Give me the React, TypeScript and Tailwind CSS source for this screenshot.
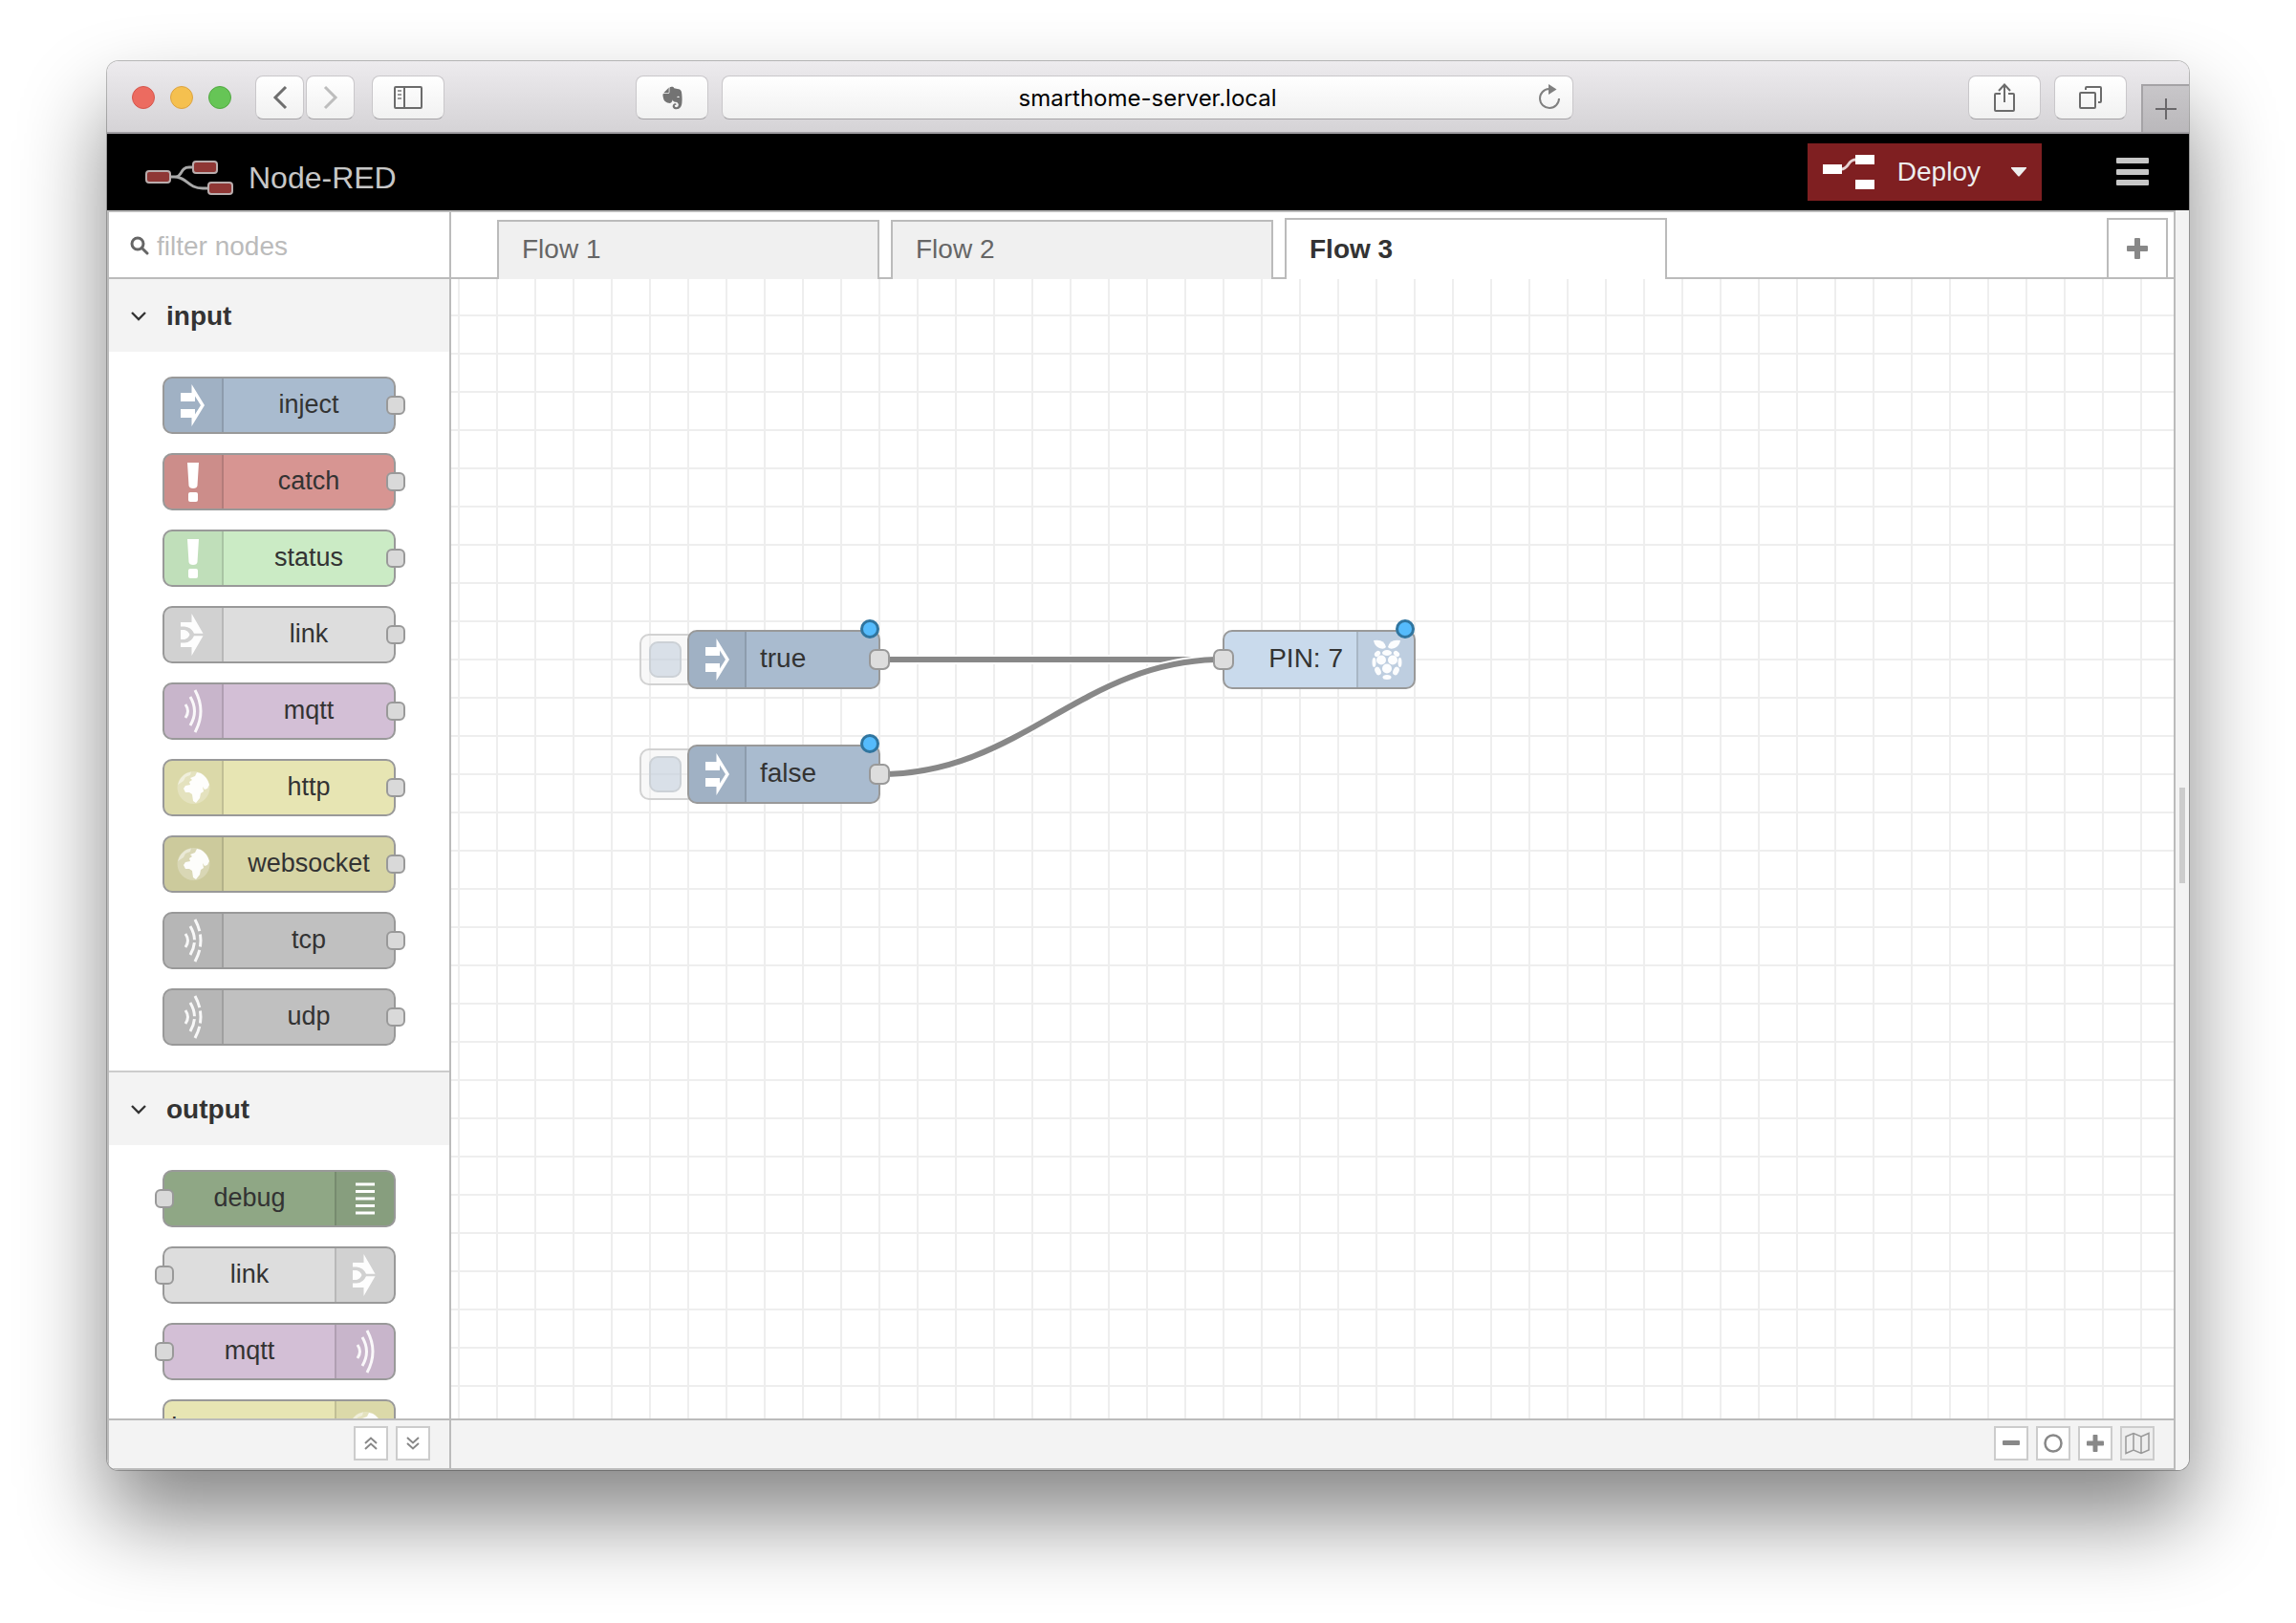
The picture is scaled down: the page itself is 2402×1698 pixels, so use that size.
import React from "react";
import clsx from "clsx";
import { FaEvernote } from "react-icons/fa";

type IconName =
  | "inject"
  | "alert"
  | "link"
  | "bridge"
  | "bridgeDash"
  | "globe"
  | "debug"
  | "raspberry";

type PaletteItem = { label: string; color: string; icon: IconName };

const inputs: PaletteItem[] = [
  { label: "inject", color: "bg-[#a9bbcf]", icon: "inject" },
  { label: "catch", color: "bg-[#d79592]", icon: "alert" },
  { label: "status", color: "bg-[#cbebc5]", icon: "alert" },
  { label: "link", color: "bg-[#dddddd]", icon: "link" },
  { label: "mqtt", color: "bg-[#d3bfd6]", icon: "bridge" },
  { label: "http", color: "bg-[#e7e5b3]", icon: "globe" },
  { label: "websocket", color: "bg-[#d7d5a5]", icon: "globe" },
  { label: "tcp", color: "bg-[#c0c0c0]", icon: "bridgeDash" },
  { label: "udp", color: "bg-[#c0c0c0]", icon: "bridgeDash" },
];

const outputs: PaletteItem[] = [
  { label: "debug", color: "bg-[#8fa785]", icon: "debug" },
  { label: "link", color: "bg-[#dddddd]", icon: "link" },
  { label: "mqtt", color: "bg-[#d3bfd6]", icon: "bridge" },
  { label: "http response", color: "bg-[#e7e5b3]", icon: "globe" },
];

const flows = ["Flow 1", "Flow 2", "Flow 3"];

const NodeIcon = ({ name }: { name: IconName }) => (
  <svg viewBox="0 0 60 60" className="size-[60px] shrink-0" fill="#fff" aria-hidden="true">
    {name === "inject" && (
      <path d="M17 17H28.500V8L42 30L28.500 52V43H17V34H32V39.500L38 30L32 20.500V26H17Z" />
    )}
    {name === "alert" && (
      <>
        <path d="M24 10H36L34.500 34Q34 37 30 37Q26 37 25.500 34Z" />
        <rect x="25" y="41" width="10" height="10" rx="2" />
      </>
    )}
    {name === "link" && (
      <g fillOpacity="0.95">
        <path d="M17 17H28.500V8L40.500 28.800H31Q28 22 21 21.500H17Z" />
        <path d="M17 43H28.500V52L40.500 31.200H31Q28 38 21 38.500H17Z" />
        <path d="M17 25H21Q25 26 26.500 30Q25 34 21 35H17Z" />
      </g>
    )}
    {(name === "bridge" || name === "bridgeDash") && (
      <g fill="none" stroke="#fff" strokeWidth="3" strokeOpacity="0.9">
        <path d="M22 23Q27 30 22 37" />
        <path d="M27 15Q36 30 27 45" strokeDasharray={name === "bridge" ? undefined : "15 3"} />
        <path d="M32 8Q44 30 32 52" strokeDasharray={name === "bridge" ? undefined : "13 3.500"} />
      </g>
    )}
    {name === "globe" && (
      <>
        <circle cx="30.500" cy="30" r="17" fillOpacity="0.25" />
        <path
          d="M14 27Q16 19 23 15L28 13.500L27 17L22 19L20 23L17 25Z"
          fillOpacity="0.45"
        />
        <path
          fillOpacity="0.95"
          d="M34 14L38 15Q45 19 47 27L45 31L42 32L40 29L41 34L38 36L37 41L33 46L30 44L29 37L26 35H22L20 31L22 28L27 27L26 24L29 22L27 20L32 18Z"
        />
      </>
    )}
    {name === "debug" && (
      <path
        d="M20 15H40M20 22.500H40M20 30H40M20 37.500H40M20 45H40"
        stroke="#fff"
        strokeWidth="3"
      />
    )}
    {name === "raspberry" && (
      <g fillOpacity="0.95">
        <path d="M16 10Q27 8 29 17Q27 20 22 18Q17 16 16 10Z" />
        <path d="M44 10Q33 8 31 17Q33 20 38 18Q43 16 44 10Z" />
        <ellipse cx="30" cy="23" rx="5" ry="3" />
        <ellipse cx="20" cy="24" rx="3.500" ry="2.500" transform="rotate(-40 20 24)" />
        <ellipse cx="40" cy="24" rx="3.500" ry="2.500" transform="rotate(40 40 24)" />
        <circle cx="24" cy="30.500" r="5" />
        <circle cx="36" cy="30.500" r="5" />
        <ellipse cx="16.500" cy="33" rx="2" ry="5" />
        <ellipse cx="43.500" cy="33" rx="2" ry="5" />
        <circle cx="30" cy="39.500" r="5" />
        <ellipse cx="20.500" cy="42" rx="3" ry="4.500" transform="rotate(-25 20.500 42)" />
        <ellipse cx="39.500" cy="42" rx="3" ry="4.500" transform="rotate(25 39.500 42)" />
        <ellipse cx="30" cy="48.500" rx="4.500" ry="2.500" />
      </g>
    )}
  </svg>
);

const PaletteNode = ({ item, output }: { item: PaletteItem; output?: boolean }) => (
  <li
    className={clsx(
      "relative flex h-[60px] w-[244px] shrink-0 rounded-[10px] border-2 border-[#999]",
      item.color,
      output && "flex-row-reverse"
    )}
  >
    <div
      className={clsx(
        "flex w-[62px] shrink-0 items-center overflow-hidden bg-black/5",
        output
          ? "rounded-r-[8px] border-l-2 border-black/12"
          : "rounded-l-[8px] border-r-2 border-black/12"
      )}
    >
      <NodeIcon name={item.icon} />
    </div>
    <span className="flex-1 self-center pb-[2px] text-center text-[27px] leading-8 whitespace-nowrap text-[#333]">
      {item.label}
    </span>
    <span
      className={clsx(
        "absolute top-[18px] size-5 rounded-[6px] border-2 border-[#999] bg-[#d9d9d9]",
        output ? "-left-[10px]" : "-right-[12px]"
      )}
    />
  </li>
);

const Category = ({
  title,
  items,
  output,
}: {
  title: string;
  items: PaletteItem[];
  output?: boolean;
}) => (
  <section className={clsx("shrink-0", output && "border-t-2 border-[#ccc]")}>
    <h2>
      <button
        type="button"
        className="flex h-[76px] w-full items-center bg-[#f3f3f3] pt-[2px] pl-[23px] text-[28px] leading-8 font-bold text-[#333]"
      >
        <svg viewBox="0 0 16 12" className="mr-[21px] h-3 w-4" fill="none" stroke="#333" strokeWidth="2.400">
          <path d="M1 2L8 9L15 2" />
        </svg>
        {title}
      </button>
    </h2>
    <ul className="flex flex-col gap-5 py-[26px] pl-14">
      {items.map((item) => (
        <PaletteNode key={item.label} item={item} output={output} />
      ))}
    </ul>
  </section>
);

const chromeButton =
  "flex h-[46px] items-center justify-center rounded-[8px] border border-[#c9c7ca] border-b-[#a5a3a6] bg-linear-to-b from-white to-[#f1f1f1]";

const Toolbar = () => (
  <div className="flex h-[76px] shrink-0 items-center border-b-2 border-[#a09ea2] bg-linear-to-b from-[#edebee] to-[#d5d3d6] pt-[2px] pl-[26px]">
    <div className="flex gap-4">
      <button type="button" aria-label="Close" className="size-6 rounded-full border border-[#d5564d] bg-[#ec6b60]" />
      <button type="button" aria-label="Minimize" className="size-6 rounded-full border border-[#dca341] bg-[#f5c04f]" />
      <button type="button" aria-label="Zoom" className="size-6 rounded-full border border-[#52a842] bg-[#66c556]" />
    </div>
    <button type="button" aria-label="Back" className={clsx(chromeButton, "ml-[25px] w-[51px]")}>
      <svg viewBox="0 0 16 26" className="h-[26px] w-4" fill="none" stroke="#6e6e6e" strokeWidth="3">
        <path d="M14 2L3 13L14 24" />
      </svg>
    </button>
    <button type="button" aria-label="Forward" className={clsx(chromeButton, "ml-[2px] w-[51px]")}>
      <svg viewBox="0 0 16 26" className="h-[26px] w-4" fill="none" stroke="#bdbdbd" strokeWidth="3">
        <path d="M2 2L13 13L2 24" />
      </svg>
    </button>
    <button type="button" aria-label="Sidebar" className={clsx(chromeButton, "ml-[18px] w-[76px]")}>
      <svg viewBox="0 0 30 24" className="h-6 w-[30px]" fill="none" stroke="#6b6b6b" strokeWidth="2">
        <rect x="1" y="1" width="28" height="22" rx="1" />
        <path d="M11 1V23" />
        <path d="M4 5H8M4 9H8M4 13H8" stroke="#999" />
      </svg>
    </button>
    <button type="button" aria-label="Evernote" className={clsx(chromeButton, "ml-[200px] w-[76px]")}>
      <FaEvernote className="size-[27px] text-[#737373]" />
    </button>
    <div className={clsx(chromeButton, "mr-[413px] ml-[14px] min-w-0 flex-1 pr-3")}>
      <input
        aria-label="Address"
        defaultValue="smarthome-server.local"
        className="min-w-0 flex-1 bg-transparent pt-[2px] pl-9 text-center font-['Inter','Liberation_Sans',sans-serif] text-[24px] leading-8 text-black outline-none"
      />
      <button type="button" aria-label="Reload">
        <svg viewBox="0 0 24 28" className="h-7 w-6" fill="none" stroke="#808080" strokeWidth="2">
          <path d="M11.500 5A10 10 0 1 0 22 15" />
          <path d="M11 0L19.500 5.500L11 11Z" fill="#808080" stroke="none" />
        </svg>
      </button>
    </div>
    <button type="button" aria-label="Share" className={clsx(chromeButton, "w-[76px]")}>
      <svg viewBox="0 0 24 32" className="h-8 w-6" fill="none" stroke="#6b6b6b" strokeWidth="2">
        <path d="M8 12H3Q2 12 2 13V29Q2 30 3 30H21Q22 30 22 29V13Q22 12 21 12H16" />
        <path d="M12 21V3M6 9L12 2.500L18 9" />
      </svg>
    </button>
    <button type="button" aria-label="Show tabs" className={clsx(chromeButton, "ml-[14px] w-[76px]")}>
      <svg viewBox="0 0 26 26" className="size-[26px]" fill="none" stroke="#6b6b6b" strokeWidth="2">
        <rect x="2" y="8" width="16" height="16" rx="1" />
        <path d="M8 5V3Q8 2 9 2H23Q24 2 24 3V17Q24 18 23 18H21" />
      </svg>
    </button>
    <button
      type="button"
      aria-label="New tab"
      className="ml-[15px] flex h-[50px] w-[50px] items-center justify-center self-end border-t-2 border-l-2 border-[#a5a3a6] bg-linear-to-b from-[#c8c6c9] to-[#bab8bb]"
    >
      <svg viewBox="0 0 22 22" className="size-[22px]" stroke="#69676a" strokeWidth="2">
        <path d="M11 0V22M0 11H22" />
      </svg>
    </button>
  </div>
);

const Header = () => (
  <header className="flex h-20 shrink-0 items-center bg-black pr-[42px] pl-10">
    <a href="#" className="flex items-center gap-4 pt-3">
      <svg viewBox="0 0 92 36" className="h-9 w-[92px]" fill="none">
        <path d="M27 17H32C39 17 36 7 46 7H50M30 17C44 17 44 29 60 29H66" stroke="#a9a9a9" strokeWidth="3" />
        <g fill="#8f3735" stroke="#b9adad" strokeWidth="2">
          <rect x="1" y="11" width="25" height="12" rx="3" />
          <rect x="50" y="1" width="25" height="12" rx="3" />
          <rect x="66" y="23" width="25" height="12" rx="3" />
        </g>
      </svg>
      <span className="text-[32px] leading-9 text-[#c7c7c7]">Node-RED</span>
    </a>
    <div className="ml-auto flex h-[60px] bg-[#7f1f21] text-[#eee]">
      <button type="button" className="flex items-center pl-4 text-[28px] leading-8">
        <svg viewBox="0 0 54 36" className="mr-6 h-9 w-[54px]" fill="#fff">
          <path d="M19 15C28 15 25 5 35 5" fill="none" stroke="#e6d2d3" strokeWidth="3" />
          <rect y="10" width="20" height="10" />
          <rect x="34" width="20" height="10" />
          <rect x="34" y="26" width="20" height="10" />
        </svg>
        Deploy
      </button>
      <button type="button" aria-label="Deploy options" className="pr-4 pl-8">
        <svg viewBox="0 0 16 10" className="h-[10px] w-4" fill="#eee">
          <path d="M0 0H16V1L9 9Q8 10 7 9L0 1Z" />
        </svg>
      </button>
    </div>
    <button type="button" aria-label="Menu" className="ml-[78px]">
      <svg viewBox="0 0 34 30" className="h-[30px] w-[34px]" fill="#c7c7c7">
        <rect y="0" width="34" height="6" rx="1" />
        <rect y="12" width="34" height="6" rx="1" />
        <rect y="23" width="34" height="6" rx="1" />
      </svg>
    </button>
  </header>
);

const footerButton = "flex size-9 items-center justify-center border-2 border-[#ccc] bg-white";

const Palette = () => (
  <aside className="flex w-[360px] shrink-0 flex-col border-2 border-[#bbb]">
    <label className="flex h-[70px] shrink-0 items-center border-b-2 border-[#bbb] pt-[2px] pl-[22px]">
      <svg viewBox="0 0 20 20" className="size-5" fill="none" stroke="#666" strokeWidth="3">
        <circle cx="8" cy="8" r="6" />
        <path d="M12.500 12.500L18 18" strokeLinecap="round" />
      </svg>
      <input
        aria-label="Filter nodes"
        placeholder="filter nodes"
        className="ml-2 min-w-0 flex-1 bg-transparent pt-[2px] text-[28px] leading-8 outline-none placeholder:text-[#bbb]"
      />
    </label>
    <div className="flex min-h-0 flex-1 flex-col overflow-hidden bg-white">
      <Category title="input" items={inputs} />
      <Category title="output" items={outputs} output />
    </div>
    <div className="flex h-[52px] shrink-0 items-center justify-end gap-2 border-t-2 border-[#bbb] bg-[#f3f3f3] pr-5 pb-[2px]">
      <button type="button" aria-label="Collapse all" className={footerButton}>
        <svg viewBox="0 0 14 14" className="size-[14px]" fill="none" stroke="#888" strokeWidth="2">
          <path d="M1 7L7 1.500L13 7M1 13L7 7.500L13 13" />
        </svg>
      </button>
      <button type="button" aria-label="Expand all" className={footerButton}>
        <svg viewBox="0 0 14 14" className="size-[14px]" fill="none" stroke="#888" strokeWidth="2">
          <path d="M1 1L7 6.500L13 1M1 7L7 12.500L13 7" />
        </svg>
      </button>
    </div>
  </aside>
);

const PlusIcon = ({ className }: { className: string }) => (
  <svg viewBox="0 0 22 22" className={className} fill="#888">
    <rect x="8" width="6" height="22" rx="1" />
    <rect y="8" width="22" height="6" rx="1" />
  </svg>
);

const Port = ({ className }: { className: string }) => (
  <span className={clsx("absolute top-[18px] size-[22px] rounded-[7px] border-2 border-[#999] bg-[#ddd]", className)} />
);

const Changed = () => (
  <span className="absolute -top-[13px] right-[-1px] size-5 rounded-full border-[3px] border-[#30759f] bg-[#55bbfc]" />
);

const InjectNode = ({ label, className }: { label: string; className: string }) => (
  <div className={clsx("absolute left-[247px] h-[62px] w-[202px]", className)}>
    <button
      type="button"
      aria-label={`Inject ${label}`}
      className="absolute top-1 -left-[50px] flex h-[54px] w-16 rounded-[10px] border-2 border-[#d2d2d2] bg-[#eee]/40 pt-[6px] pl-2"
    >
      <span className="h-[38px] w-[34px] rounded-[9px] border-2 border-[#ccd1d6] bg-[#a9bbcf]/40" />
    </button>
    <div className="relative flex h-full items-center rounded-[10px] border-2 border-[#999] bg-[#a9bbcf]">
      <div className="flex h-full w-[60px] items-center rounded-l-[8px] border-r-2 border-black/12 bg-black/5">
        <NodeIcon name="inject" />
      </div>
      <span className="pb-[2px] pl-[14px] text-[28px] leading-8 text-[#333]">{label}</span>
      <Port className="-right-[12px]" />
      <Changed />
    </div>
  </div>
);

const Canvas = () => (
  <div className="relative min-h-0 flex-1 overflow-hidden bg-white bg-[linear-gradient(to_right,#eee_2px,transparent_2px),linear-gradient(to_bottom,#eee_2px,transparent_2px)] bg-[size:40px_40px] bg-[position:7px_37px]">
    <svg className="absolute inset-0 size-full" fill="none">
      <path d="M448 398H808" stroke="#fff" strokeWidth="10" />
      <path d="M448 398H808" stroke="#888" strokeWidth="6" />
      <path d="M448 518C598 518 658 398 808 398" stroke="#fff" strokeWidth="10" />
      <path d="M448 518C598 518 658 398 808 398" stroke="#888" strokeWidth="6" />
    </svg>
    <InjectNode label="true" className="top-[367px]" />
    <InjectNode label="false" className="top-[487px]" />
    <div className="absolute top-[367px] left-[807px] flex h-[62px] w-[202px] items-center justify-end rounded-[10px] border-2 border-[#999] bg-[#c9daec]">
      <span className="pr-[14px] pb-[2px] text-[28px] leading-8 text-[#333]">PIN: 7</span>
      <div className="flex h-full w-[60px] items-center rounded-r-[8px] border-l-2 border-black/12 bg-black/5">
        <NodeIcon name="raspberry" />
      </div>
      <Port className="-left-[12px]" />
      <Changed />
    </div>
  </div>
);

const Workspace = () => (
  <main className="flex min-w-0 flex-1 flex-col border-y-2 border-r-2 border-[#bbb] bg-white">
    <div className="flex h-[70px] shrink-0 items-end border-b-2 border-[#bbb] pr-[6px] pl-12">
      <div role="tablist" className="-mb-[2px] flex items-end gap-3">
        {flows.map((flow, index) => {
          const active = index === flows.length - 1;
          return (
            <button
              key={flow}
              type="button"
              role="tab"
              aria-selected={active}
              className={clsx(
                "w-[400px] border-2 border-b-0 border-[#bbb] pl-6 text-left text-[28px] leading-8",
                active ? "h-16 bg-white font-bold text-[#333]" : "h-[62px] bg-[#f0f0f0] pb-[2px] text-[#666]"
              )}
            >
              {flow}
            </button>
          );
        })}
      </div>
      <button
        type="button"
        aria-label="Add flow"
        className="ml-auto flex h-[62px] w-16 items-center justify-center border-2 border-b-0 border-[#bbb] bg-white"
      >
        <PlusIcon className="size-[22px]" />
      </button>
    </div>
    <Canvas />
    <div className="flex h-[52px] shrink-0 items-center justify-end gap-2 border-t-2 border-[#bbb] bg-[#f3f3f3] pr-5 pb-[2px]">
      <button type="button" aria-label="Zoom out" className={footerButton}>
        <svg viewBox="0 0 18 18" className="size-[18px]" fill="#888">
          <rect y="6" width="18" height="5" rx="1" />
        </svg>
      </button>
      <button type="button" aria-label="Reset zoom" className={footerButton}>
        <svg viewBox="0 0 20 20" className="size-5" fill="none" stroke="#888" strokeWidth="2.500">
          <circle cx="10" cy="10" r="8.500" />
        </svg>
      </button>
      <button type="button" aria-label="Zoom in" className={footerButton}>
        <PlusIcon className="size-[18px]" />
      </button>
      <button type="button" aria-label="Toggle navigator" className="flex size-9 items-center justify-center border-2 border-[#ccc] bg-[#eee]">
        <svg viewBox="0 0 26 24" className="h-6 w-[26px]" fill="none" stroke="#999" strokeWidth="1.500">
          <path d="M1 5L9 1.500L17 5L25 1.500V19L17 22.500L9 19L1 22.500ZM9 1.500V19M17 5V22.500" />
        </svg>
      </button>
    </div>
  </main>
);

const App = () => (
  <div className="flex h-screen flex-col bg-white px-28 pt-16 pb-40 font-['Liberation_Sans',Arial,sans-serif]">
    <div className="flex min-h-0 flex-1 flex-col overflow-hidden rounded-[12px] bg-white shadow-[0_0_0_1px_rgba(0,0,0,0.25),0_50px_90px_rgba(0,0,0,0.48)]">
      <Toolbar />
      <Header />
      <div className="flex min-h-0 flex-1">
        <Palette />
        <Workspace />
        <div className="flex w-[14px] shrink-0 items-center justify-center bg-[#f3f3f3] pb-[10px]">
          <span className="h-[100px] w-[6px] bg-[#ccc]" />
        </div>
      </div>
    </div>
  </div>
);

export default App;
